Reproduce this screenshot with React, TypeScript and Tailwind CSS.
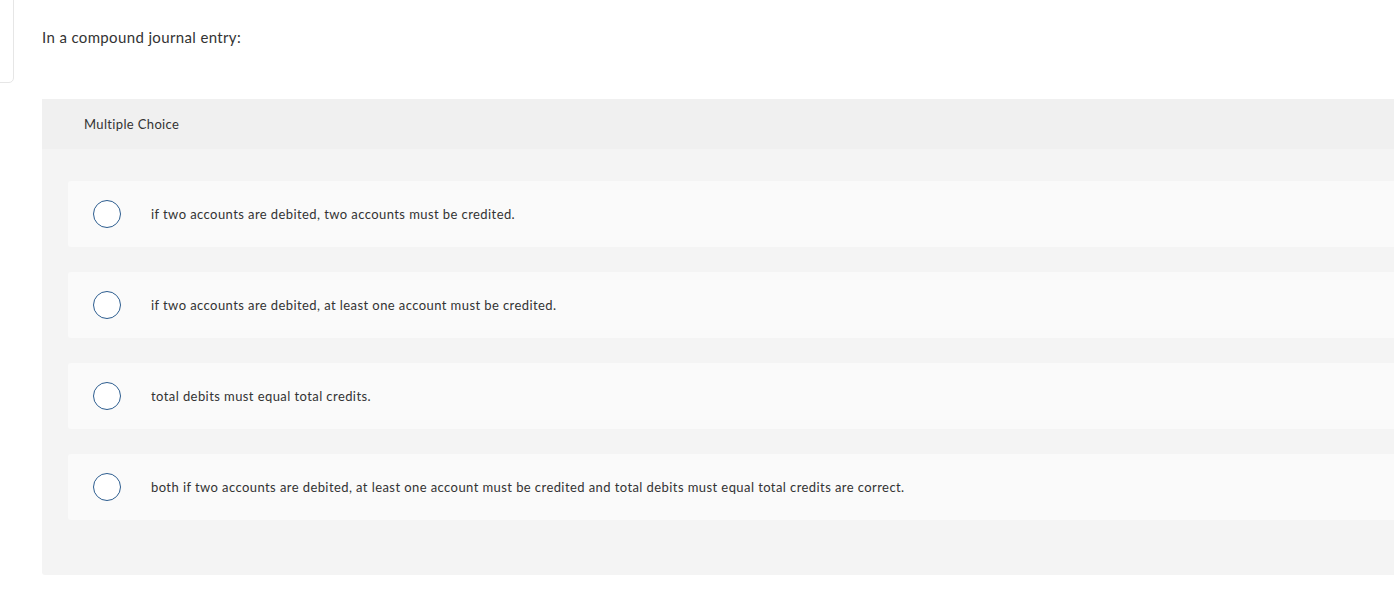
import React from "react";

const options = [
  "if two accounts are debited, two accounts must be credited.",
  "if two accounts are debited, at least one account must be credited.",
  "total debits must equal total credits.",
  "both if two accounts are debited, at least one account must be credited and total debits must equal total credits are correct.",
];

export default function App() {
  return (
    <div
      className="relative w-[1394px] h-[613px] overflow-hidden bg-white text-[#333]"
      style={{ fontFamily: "Lato, 'Open Sans', Arial, sans-serif" }}
    >
      <div className="absolute left-[-20px] top-[-10px] w-[34px] h-[93px] border border-[#e6e6e6] rounded-[5px]" />
      <div className="pl-[42px] pt-[27px]">
        <p className="text-[15px] leading-[20px] tracking-[0.36px] text-[#333]">In a compound journal entry:</p>
        <div className="mt-[52px] w-[1400px] bg-[#f4f4f4] rounded-l-[3px] pb-[55px]">
          <div className="h-[50px] bg-[#f0f0f0] flex items-center pl-[42px] pt-[2px] text-[13px] tracking-[0.35px] text-[#333]">
            Multiple Choice
          </div>
          <div className="pt-[32px] pl-[26px] flex flex-col gap-[25px]">
            {options.map((o) => (
              <div key={o} className="h-[66px] bg-[#fafafa] rounded-[3px] flex items-center">
                <div className="ml-[25px] w-[28px] h-[28px] rounded-full border-[1.5px] border-[#2c5d8f] bg-white shrink-0" />
                <span className="ml-[30px] pt-[2px] text-[13px] tracking-[0.42px] text-[#333]">{o}</span>
              </div>
            ))}
          </div>
        </div>
      </div>
    </div>
  );
}
